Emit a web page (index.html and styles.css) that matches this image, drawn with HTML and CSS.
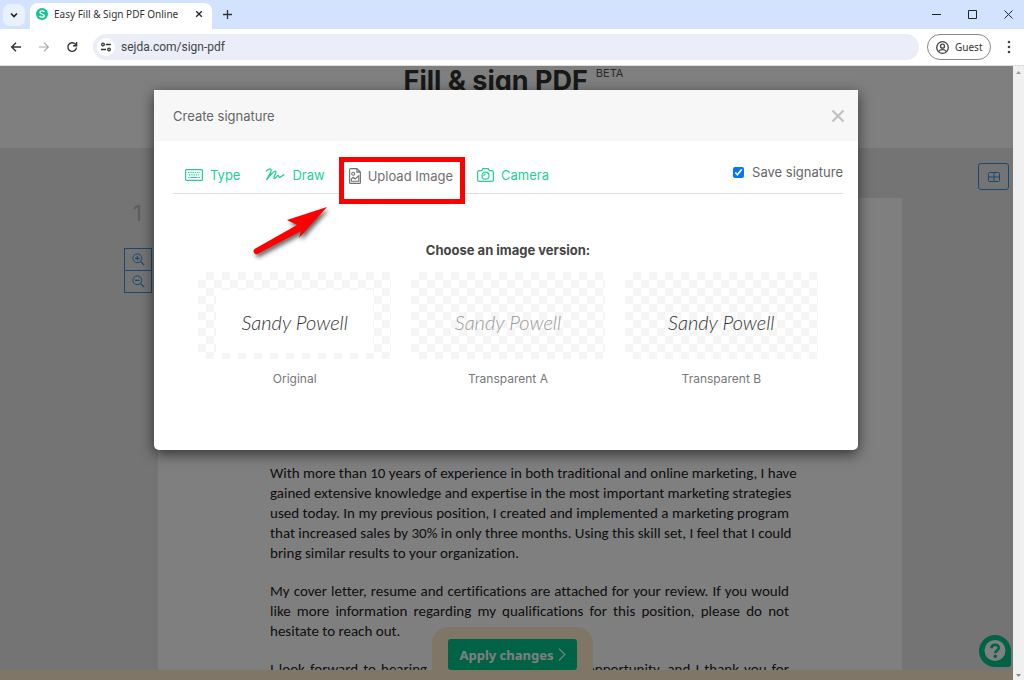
FILE: index.html
```html
<!DOCTYPE html>
<html lang="en">
<head>
<meta charset="utf-8">
<title>Easy Fill &amp; Sign PDF Online</title>
<link rel="stylesheet" href="styles.css">
</head>
<body>
<div class="browser">
  <div class="tabstrip">
    <button class="tab-menu" aria-label="Search tabs"><svg width="10" height="10" viewBox="0 0 10 10"><path d="M2 3.5l3 3 3-3" fill="none" stroke="#222" stroke-width="1.7"/></svg></button>
    <div class="browser-tab">
      <svg width="12" height="12" viewBox="0 0 12 12"><circle cx="6" cy="6" r="6" fill="#16c492"/><path d="M8.4 3.9C7.8 2.6 4 2.4 4 4.4S8.3 5.7 8.3 7.7 4.400 9.500 3.600 7.900" fill="none" stroke="#fff" stroke-width="1.400"/></svg>
      <span class="tab-title">Easy Fill &amp; Sign PDF Online</span>
      <button class="plain" aria-label="Close tab"><svg width="8" height="8" viewBox="0 0 8 8"><path d="M1.200 1.200l5.600 5.600M6.800 1.200L1.200 6.800" stroke="#222" stroke-width="1.300"/></svg></button>
    </div>
    <button class="plain new-tab" aria-label="New tab"><svg width="9" height="9" viewBox="0 0 9 9"><path d="M4.500 0v9M0 4.500h9" stroke="#333" stroke-width="1.300"/></svg></button>
    <div class="window-buttons">
      <button class="plain" aria-label="Minimize"><svg width="9" height="9" viewBox="0 0 9 9"><path d="M0 4.500h9" stroke="#222"/></svg></button>
      <button class="plain" aria-label="Maximize"><svg width="9" height="9" viewBox="0 0 9 9"><path d="M.5.5h8v8h-8z" fill="none" stroke="#222"/></svg></button>
      <button class="plain" aria-label="Close"><svg width="9" height="9" viewBox="0 0 9 9"><path d="M.5.5l8 8M8.500.5l-8 8" stroke="#222"/></svg></button>
    </div>
  </div>
  <div class="toolbar">
    <button class="plain" aria-label="Back"><svg width="12" height="12" viewBox="0 0 12 12"><path d="M11 6H2M6 1.700L1.700 6 6 10.300" fill="none" stroke="#333" stroke-width="1.400"/></svg></button>
    <button class="plain" aria-label="Forward"><svg width="12" height="12" viewBox="0 0 12 12"><path d="M1 6h9M6 1.700L10.300 6 6 10.300" fill="none" stroke="#aaa" stroke-width="1.200"/></svg></button>
    <button class="plain" aria-label="Reload"><svg width="12" height="12" viewBox="0 0 12 12"><path d="M10.500 6.500A4.300 4.300 0 1 1 9.300 3L10 3.800" fill="none" stroke="#333" stroke-width="1.400"/><path d="M10.600 1v3.700H7" fill="none" stroke="#333" stroke-width="1.400"/></svg></button>
    <div class="address">
      <span class="site-info"><svg width="12" height="12" viewBox="0 0 12 12"><g fill="none" stroke="#333" stroke-width="1.300"><circle cx="3" cy="3.500" r="1.300"/><path d="M5.800 3.500h5M1 8.500h5"/><circle cx="9" cy="8.500" r="1.300"/></g></svg></span>
      <input class="url" aria-label="Address" value="sejda.com/sign-pdf">
    </div>
    <button class="guest"><svg width="13" height="13" viewBox="0 0 13 13"><g fill="none" stroke="#444" stroke-width="1.300"><circle cx="6.500" cy="6.500" r="5.800"/><circle cx="6.500" cy="5.200" r="2"/><path d="M2.800 10.500c1.500-2.400 5.900-2.400 7.400 0"/></g></svg>Guest</button>
    <button class="plain" aria-label="Menu"><svg width="4" height="14" viewBox="0 0 4 14"><g fill="#444"><circle cx="2" cy="2" r="1.300"/><circle cx="2" cy="7" r="1.300"/><circle cx="2" cy="12" r="1.300"/></g></svg></button>
  </div>

  <div class="viewport">
    <main class="site">
      <header class="site-header"><h1>Fill &amp; sign PDF</h1><sup class="beta">BETA</sup></header>
      <div class="workspace">
        <div class="left-rail">
          <span class="page-number">1</span>
          <div class="zoom-group">
            <button aria-label="Zoom in"><svg width="13" height="13" viewBox="0 0 13 13"><path d="M8.500 8.500l3.700 3.700M3 5.300h4.600M5.300 3v4.600" stroke="#3293e4" stroke-width="1.200"/><circle cx="5.300" cy="5.300" r="4.400" fill="none" stroke="#3293e4"/></svg></button>
            <button aria-label="Zoom out"><svg width="13" height="13" viewBox="0 0 13 13"><path d="M8.500 8.500l3.700 3.700M3 5.300h4.600" stroke="#3293e4" stroke-width="1.200"/><circle cx="5.300" cy="5.300" r="4.400" fill="none" stroke="#3293e4"/></svg></button>
          </div>
        </div>
        <article class="sheet">
          <p><span>With more than 10 years of experience in both traditional and online marketing, I have</span>
          <span>gained extensive knowledge and expertise in the most important marketing strategies</span>
          <span>used today. In my previous position, I created and implemented a marketing program</span>
          <span>that increased sales by 30% in only three months. Using this skill set, I feel that I could</span>
          <span class="last">bring similar results to your organization.</span></p>
          <p><span>My cover letter, resume and certifications are attached for your review. If you would</span>
          <span>like more information regarding my qualifications for this position, please do not</span>
          <span class="last">hesitate to reach out.</span></p>
          <p><span>I look forward to hearing from you about this job opportunity, and I thank you for</span></p>
        </article>
        <div class="right-rail">
          <button class="grid-button" aria-label="Show pages"><svg width="12" height="10" viewBox="0 0 12 10"><path d="M1.500.5h9a1 1 0 0 1 1 1v7a1 1 0 0 1-1 1h-9a1 1 0 0 1-1-1v-7a1 1 0 0 1 1-1zM6 .5v9M.5 5h11" fill="none" stroke="#3293e4"/></svg></button>
        </div>
      </div>
      <div class="apply-bar"><div class="apply-box"><button class="apply">Apply changes<svg width="8" height="13" viewBox="0 0 8 13"><path d="M1 .7l5.800 5.800L1 12.300" fill="none" stroke="#fff" stroke-width="1.200"/></svg></button></div></div>
      <button class="help" aria-label="Help"><svg width="32" height="32" viewBox="0 0 32 32"><path d="M16 0a16 16 0 0 1 16 16v13a3 3 0 0 1-3 3H16a16 16 0 0 1 0-32z" fill="#00c68c"/><circle cx="16" cy="15.500" r="10.500" fill="#fff"/><path d="M12.400 13.200c0-4.400 7.400-4.400 7.400-.4 0 2.700-3.500 2.600-3.500 5.400" fill="none" stroke="#00c68c" stroke-width="2.600"/><circle cx="16.300" cy="21.300" r="1.700" fill="#00c68c"/></svg></button>

      <div class="backdrop">
        <section class="modal" role="dialog" aria-labelledby="modal-title">
          <header class="modal-header"><h2 id="modal-title">Create signature</h2><button class="plain" aria-label="Close dialog"><svg width="14" height="14" viewBox="0 0 14 14"><path d="M1.500 1.500l11 11M12.500 1.500l-11 11" stroke="#c2c2c2" stroke-width="2.400"/></svg></button></header>
          <div class="modal-body">
            <nav class="tabs">
              <a class="tab type" href="#type"><svg width="18" height="12" viewBox="0 0 18 12"><rect x=".6" y=".6" width="16.800" height="10.800" rx="1" fill="none" stroke="#22cf99" stroke-width="1.200"/><path d="M3 3.500h12M4 5.900h10" stroke="#22cf99" stroke-width="1.200" stroke-dasharray="1.300 1"/><path d="M3 8.500h1.500M5.500 8.500h7M13.500 8.500H15" stroke="#22cf99" stroke-width="1.200"/></svg>Type</a>
              <a class="tab draw" href="#draw"><svg width="20" height="13" viewBox="0 0 20 13"><path d="M1 3.500C2.500 1.200 6.200-.3 6.200 2.200 6.200 4.800 2.500 9.500 1.600 12 4.500 7.500 9.300 2.600 10.700 3.200 12 4 7.800 9.800 9.200 10.600c1.300.6 2.800-3.300 4-3.200 1 .2 0 2.100 1.600 1.900 1.600-.1 2.700-2.300 4.600-2.600" fill="none" stroke="#22cf99" stroke-width="1.300"/></svg>Draw</a>
              <a class="tab upload" href="#upload" aria-current="page"><svg width="12" height="16" viewBox="0 0 12 16"><g fill="none" stroke="#707070" stroke-width="1.100"><path d="M1.600.6h6.200l3.600 3.500v10.300a1 1 0 0 1-1 1H1.600a1 1 0 0 1-1-1V1.600a1 1 0 0 1 1-1zM7.800.6v3.500h3.600"/><circle cx="4.200" cy="5.800" r="1.500"/><path d="M2.300 13.200V11l2-1.700 1.800 1.700L9.800 7.800v5.400z"/></g></svg>Upload Image</a>
              <a class="tab camera" href="#camera"><svg width="17" height="14" viewBox="0 0 17 14"><g fill="none" stroke="#22cf99" stroke-width="1.200"><path d="M2 2.700h2.700L5.800.7h5.400l1.100 2H15a1.400 1.400 0 0 1 1.400 1.400v7.900a1.400 1.400 0 0 1-1.400 1.400H2A1.400 1.400 0 0 1 .6 12V4.100A1.400 1.400 0 0 1 2 2.700z"/><circle cx="8.500" cy="7.700" r="3.500"/><path d="M6.800 8a1.800 1.800 0 0 1 1.800-1.800"/></g></svg>Camera</a>
              <label class="save"><input type="checkbox" checked>Save signature</label>
            </nav>
            <svg class="arrow" width="84" height="60" viewBox="0 0 84 60"><path d="M76 6L36 19l10 5L3.500 48a3 3 0 0 0 3 5L50 30l-2 7z" fill="#f00"/></svg>
            <h3 class="choose">Choose an image version:</h3>
            <div class="versions">
              <button class="version original"><span class="preview"><span class="signature">Sandy Powell</span></span>Original</button>
              <button class="version faint"><span class="preview"><span class="signature">Sandy Powell</span></span>Transparent A</button>
              <button class="version"><span class="preview"><span class="signature">Sandy Powell</span></span>Transparent B</button>
            </div>
          </div>
        </section>
      </div>
    </main>
    <div class="scrollbar"><svg width="5" height="3" viewBox="0 0 5 3"><path d="M0 3L2.500 0 5 3z" fill="#999"/></svg><svg width="5" height="3" viewBox="0 0 5 3"><path d="M0 0h5L2.500 3z" fill="#888"/></svg></div>
  </div>
</div>
</body>
</html>
```
FILE: styles.css
```css
* { box-sizing: border-box; }
body { margin: 0; font-family: Inter, "Liberation Sans", sans-serif; }
button { font: inherit; cursor: pointer; }
svg { display: block; flex: none; }
h1, h2, h3, p { margin: 0; }
.plain { border: 0; padding: 0; background: none; display: flex; align-items: center; }
.browser { height: 100vh; display: flex; flex-direction: column; overflow: hidden; font-size: 13px; }

.tabstrip { display: flex; align-items: center; height: 29px; flex: none; background: #d3e3fd; padding: 0 10px 0 3px; font-family: "Noto Sans", sans-serif; }
.tab-menu { width: 22px; height: 22px; border: 0; border-radius: 7px; background: #e9f0fe; padding: 0; display: flex; align-items: center; justify-content: center; }
.browser-tab { align-self: flex-end; height: 26px; width: 182px; margin-left: 5px; padding: 0 9px 4px 6px; display: flex; align-items: center; gap: 6px; background: #fff; border-radius: 8px 8px 0 0; font-size: 10px; color: #333; }
.tab-title { flex: 1; white-space: nowrap; }
.new-tab { margin-left: 11px; }
.window-buttons { margin-left: auto; display: flex; gap: 27px; padding-right: 1px; }

.toolbar { display: flex; align-items: center; gap: 16px; height: 37px; flex: none; padding: 0 13px 0 10px; background: #fff; border-bottom: 1px solid #ddd; font-family: "Noto Sans", sans-serif; }
.address { flex: 1; height: 26px; display: flex; align-items: center; gap: 6px; margin: 0 -8px 0 -1px; padding: 0 4px; background: #ebeef8; border-radius: 13px; }
.site-info { width: 18px; height: 18px; display: grid; place-items: center; background: #fff; border-radius: 50%; }
.url { flex: 1; border: 0; padding: 0; background: none; font: 12px Roboto, sans-serif; color: #444; }
.guest { width: 64px; height: 26px; padding: 0 8px; display: flex; align-items: center; gap: 6px; background: #fff; border: 1px solid #888; border-radius: 13px; font-size: 10px; color: #333; }

.viewport { flex: 1; min-height: 0; display: flex; }
.site { flex: 1; min-width: 0; position: relative; display: flex; flex-direction: column; overflow: hidden; background: #e8e8e8; }
.site-header { height: 82px; flex: none; display: flex; justify-content: center; align-items: flex-start; gap: 8px; padding-left: 14px; background: #fff; color: #303030; }
.site-header h1 { font-size: 27px; line-height: 30px; }
.beta { font-size: 11px; line-height: 14px; color: #555; }
.workspace { flex: 1; min-height: 0; display: flex; }
.left-rail { width: 158px; flex: none; padding: 52px 6px 0 0; display: flex; flex-direction: column; align-items: flex-end; gap: 22px; }
.page-number { margin-right: 10px; font-size: 22px; line-height: 26px; color: #bbb; }
.zoom-group { display: flex; flex-direction: column; width: 28px; }
.zoom-group button { height: 23px; display: grid; place-items: center; padding: 0; background: none; border: 1px solid #3293e4; }
.zoom-group button + button { margin-top: -1px; }
.sheet { flex: 1; margin-top: 50px; padding: 265px 113px 0 112px; background: #fff; overflow: hidden; display: flex; flex-direction: column; gap: 18px; font-family: Carlito, Lato, sans-serif; font-size: 15px; line-height: 20px; font-variant-ligatures: none; color: #222; }
.sheet span { display: block; white-space: nowrap; text-align: justify; text-align-last: justify; }
.sheet .last { text-align-last: left; }
.right-rail { width: 111px; flex: none; padding: 15px 4px 0 0; display: flex; justify-content: flex-end; align-items: flex-start; }
.grid-button { width: 31px; height: 27px; padding: 0; display: grid; place-items: center; background: none; border: 1px solid #3293e4; border-radius: 3px; }
.apply-bar { height: 10px; flex: none; display: flex; justify-content: center; align-items: flex-end; background: #ffecce; padding-left: 12px; }
.apply-box { background: #ffecce; padding: 12px 16px 10px; border-radius: 16px 16px 0 0; }
.apply { height: 31px; width: 129px; padding: 0; display: flex; align-items: center; justify-content: center; gap: 4px; background: #00c68c; border: 0; border-radius: 3px; color: #fff; font-weight: 700; font-size: 13px; white-space: nowrap; font-family: "Noto Sans", sans-serif; }
.help { position: absolute; right: 2px; bottom: 13px; padding: 0; background: none; border: 0; }
.scrollbar { width: 11px; display: flex; flex-direction: column; justify-content: space-between; align-items: center; padding: 5px 0 3px; background: #f0f0f0; }

.backdrop { position: absolute; inset: 0; padding: 24px 17px 0 16px; background: rgba(0, 0, 0, .5); }
.modal { max-width: 704px; margin: 0 auto; background: #fff; border-radius: 0 0 5px 5px; box-shadow: 0 4px 14px rgba(0, 0, 0, .6); color: #666; }
.modal-header { height: 51px; padding: 0 13px 0 19px; display: flex; align-items: center; justify-content: space-between; background: #f7f7f7; }
.modal-header h2 { font-size: 13px; font-weight: 400; }
.modal-body { position: relative; padding: 16px 15px 62px 19px; }
.tabs { display: flex; height: 37px; border-bottom: 1px solid #ddd; font-size: 13px; line-height: 16px; }
.tab { display: flex; align-items: center; gap: 7px; padding: 0 12px 1px; text-decoration: none; color: #22cf99; white-space: nowrap; }
.draw { padding: 0 14px 1px 13px; }
.upload { position: relative; padding: 0 11px 1px 9px; color: #707070; background: #fff; border: 1px solid #ddd; border-bottom: 0; margin-bottom: -1px; }
.upload::after { content: ""; position: absolute; inset: -1px -1px -10px; border: 5px solid #f00; }
.save { margin-left: auto; display: flex; align-items: center; gap: 8px; height: 30px; white-space: nowrap; }
.save input { width: 11px; height: 11px; margin: 0; accent-color: #0075ff; }
.arrow { position: absolute; left: 97px; top: 60px; filter: drop-shadow(2px 3px 2px rgba(0, 0, 0, .6)); }
.choose { margin-top: 47px; font-size: 13px; line-height: 18px; text-align: center; color: #444; }
.versions { display: grid; grid-template-columns: repeat(3, 1fr); gap: 20px; margin: 13px 25px 0; }
.version { padding: 0; border: 0; background: none; color: #777; font-size: 12px; line-height: 18px; display: flex; flex-direction: column; align-items: center; gap: 11px; }
.preview { align-self: stretch; height: 87px; padding: 18px 18px 6px; display: flex; background: repeating-conic-gradient(#f5f5f5 0 25%, #fff 0 50%) 0 0 / 16px 16px; }
.signature { flex: 1; display: flex; align-items: center; justify-content: center; font: italic 300 20px Lato, cursive; color: #333; }
.original .signature { background: #fff; }
.faint .signature { color: #999; }
```
